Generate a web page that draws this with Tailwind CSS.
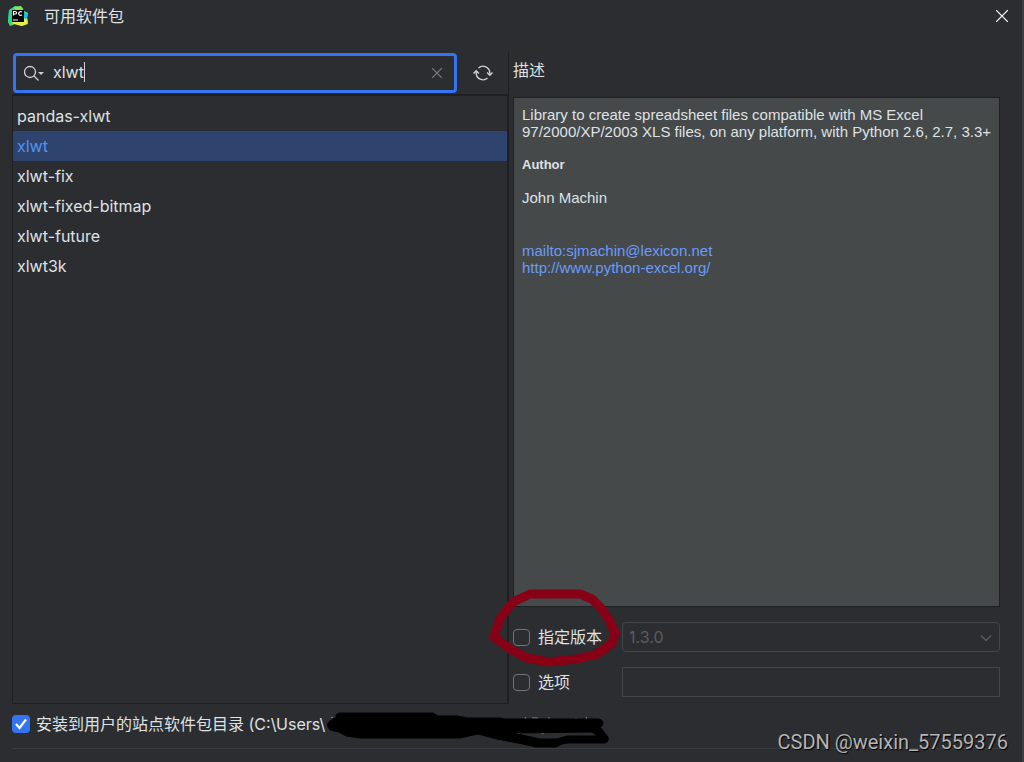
<!DOCTYPE html>
<html lang="zh-CN">
<head>
<meta charset="utf-8">
<meta name="viewport" content="width=device-width, initial-scale=1">
<title>可用软件包</title>
<script src="https://cdn.jsdelivr.net/npm/@tailwindcss/browser@4"></script>
</head>
<body class="relative flex min-h-screen flex-col border-r-2 border-[#3c3e41] bg-[#2b2d30] font-['Inter','Noto_Sans_CJK_SC',sans-serif] text-base leading-6 text-[#dfe1e5]">

<header class="flex h-8 items-center pr-3 pl-2">
  <svg class="h-5 w-5" viewBox="0 0 20 20" aria-hidden="true">
    <defs>
      <linearGradient id="pc" x1="0" y1="0" x2="1" y2="1"><stop offset="0" stop-color="#21d789"/><stop offset=".5" stop-color="#4fdc6b"/><stop offset="1" stop-color="#fcf84a"/></linearGradient>
    </defs>
    <path d="M1 4 7 0l7 1 2 4 4 2-1 4 1 5-6 4-7-2-5 2-2-4z" fill="url(#pc)"/>
    <path d="M0 16l1-11 3-1v14z" fill="#21d789"/>
    <path d="M6 1l7-1 3 5H8z" fill="#8be24f"/>
    <path d="M16 6l4 2-1 4-3 2z" fill="#07c3f2"/>
    <path d="M4 16h12v-4l3 3 1 3-6 2-8-2z" fill="#e4ef4a"/>
    <path d="M4 4h12v12H4z" fill="#000"/>
    <path d="M5.500 9.500V5.500h1.800a1.200 1.200 0 0 1 0 2.500H5.500M14 6.200a1.900 1.900 0 1 0 0 2.600M5 14h5" fill="none" stroke="#fff" stroke-width="1.200"/>
  </svg>
  <h1 class="ml-4 flex-1">可用软件包</h1>
  <button type="button" aria-label="关闭" class="p-0.5">
    <svg class="h-3 w-3" viewBox="0 0 12 12" fill="none" stroke="#fff" stroke-width="1.200"><path d="M0 0l12 12M12 0L0 12"/></svg>
  </button>
</header>

<main class="grid flex-1 grid-cols-[497fr_487fr] gap-1 pt-5 pr-[22px] pl-3">
  <section class="flex flex-col" aria-label="软件包">
    <div class="flex h-[42px] items-center border-r border-[#1e1f22] pl-px">
      <div class="relative flex h-10 flex-1 items-center rounded-sm border-[3px] border-[#3574f0] pr-2 pl-2">
        <svg class="h-5 w-5" viewBox="0 0 20 20" fill="none" stroke="#ced0d6" stroke-width="1.300" aria-hidden="true"><circle cx="6" cy="9" r="5.500"/><path d="M10 13l4.500 4.500"/><path d="M14 9h6L17 12z" fill="#ced0d6" stroke="none"/></svg>
        <input type="text" value="xlwt" aria-label="搜索" class="ml-[9px] w-full min-w-0 flex-1 bg-transparent pb-0.5 outline-none">
        <span class="absolute top-1.5 left-[68px] h-5 w-px bg-[#ced0d6]"></span>
        <button type="button" aria-label="清除" class="p-1">
          <svg class="h-2.5 w-2.5" viewBox="0 0 10 10" fill="none" stroke="#7b7d82" stroke-width="1.200"><path d="M0 0l10 10M10 0L0 10"/></svg>
        </button>
      </div>
      <button type="button" aria-label="刷新" class="mr-[15px] ml-4 h-5 w-5">
        <svg class="h-5 w-5" viewBox="0 0 20 20" fill="none" stroke="#ced0d6" stroke-width="1.400"><path d="M16.800 12V10A6.800 6.800 0 0 0 5.500 4.900M3.200 8v2a6.800 6.800 0 0 0 11.300 5.100"/><path d="M.5 10.500l2.700-2.700 2.700 2.700M14.100 9.500l2.700 2.700 2.700-2.700"/></svg>
      </button>
    </div>
    <ul class="flex-1 border border-t-2 border-r-2 border-[#1e1f22] pt-[5px] leading-[30px] *:px-1">
      <li>pandas-xlwt</li>
      <li class="bg-[#2e436e] text-[#5394ec]" aria-current="true">xlwt</li>
      <li>xlwt-fix</li>
      <li>xlwt-fixed-bitmap</li>
      <li>xlwt-future</li>
      <li>xlwt3k</li>
    </ul>
  </section>

  <section class="flex flex-col" aria-labelledby="desc">
    <h2 id="desc" class="h-[45px] pt-1.5">描述</h2>
    <article class="flex-1 border border-[#1e1f22] bg-[#45494a] py-2 pl-2 font-['Liberation_Sans',sans-serif] text-[15px] leading-[17px]">
      <p>Library to create spreadsheet files compatible with MS Excel<br>97/2000/XP/2003 XLS files, on any platform, with Python 2.6, 2.7, 3.3+</p>
      <h3 class="mt-4 text-[13px] font-bold">Author</h3>
      <p class="mt-4">John Machin</p>
      <p class="mt-9 text-[#6b9bfa]"><a href="mailto:sjmachin@lexicon.net">mailto:sjmachin@lexicon.net</a><br><a href="http://www.python-excel.org/">http://www.python-excel.org/</a></p>
    </article>
    <div class="grid grid-cols-[109px_1fr] items-center gap-y-[15px] pt-[15px] pb-[7px]">
      <label class="flex items-center gap-2"><input type="checkbox" class="h-[17px] w-[17px] appearance-none rounded-sm border border-[#6f737a]">指定版本</label>
      <div class="relative">
        <select disabled aria-label="版本" class="block h-[30px] w-full appearance-none rounded-sm border border-[#43454a] px-1.5 leading-6 text-[#5a5d63] opacity-100"><option>1.3.0</option></select>
        <svg class="pointer-events-none absolute top-3 right-2 h-2 w-3" viewBox="0 0 12 8" fill="none" stroke="#5a5d63" stroke-width="1.400"><path d="M1 1.500l5 5 5-5"/></svg>
      </div>
      <label class="flex items-center gap-2"><input type="checkbox" class="h-[17px] w-[17px] appearance-none rounded-sm border border-[#6f737a]">选项</label>
      <input type="text" aria-label="选项值" class="h-[30px] w-full min-w-0 border border-[#43454a] px-2">
    </div>
  </section>
</main>

<footer class="ml-3 pb-[13px]">
  <div class="mr-[22px] flex h-[45px] items-center border-b border-[#393b40] pb-1">
    <label class="flex items-center gap-1.5 whitespace-nowrap">
      <span class="relative flex">
        <input type="checkbox" checked class="h-[18px] w-[18px] appearance-none rounded-sm bg-[#3574f0]">
        <svg class="pointer-events-none absolute inset-0" viewBox="0 0 18 18" fill="none" stroke="#fff" stroke-width="2.200"><path d="M4 9l3.500 4L14 4.500"/></svg>
      </span>
      安装到用户的站点软件包目录 (C:\Users\
    </label>
  </div>
</footer>

<svg class="pointer-events-none absolute top-[580px] left-[480px] h-[90px] w-[150px]" viewBox="480 580 150 90" fill="none" stroke="#880015" stroke-width="9" stroke-linejoin="round" stroke-linecap="round" aria-hidden="true"><path d="M530 594h50l12 5 9 9 7 10 7 15-3 10-15 11-20 5-29 3-21-4-17-9-16-12 2-7 5-13 12-15z"/></svg>
<svg class="pointer-events-none absolute top-[705px] left-[320px] h-[50px] w-[300px]" viewBox="320 705 300 50" aria-hidden="true">
  <path d="M331 718l2-1M525 717l1 2M532 718h6M549 717v2M576 718v1M586 717l1 2M517 734l4-2M541 733h3" stroke="#8d8f93" fill="none"/>
  <path d="M336 716q0-3 5-3h92l5 3h19l11 2h32l4 1h95q4 1 4 4t-3 4l8 10q1 5-3 6h-38l-5 1-6 3h-20l-13-3-26-5-19-5-18 4H360l-14-2-7-4-9-2q-5-6 0-9 3-3 6-3zM513 733l27 6h17l10-3h30l-5-4z" fill="#000" stroke="#000" fill-rule="evenodd"/>
</svg>
<p class="pointer-events-none absolute right-[14px] bottom-2 font-['Roboto',sans-serif] text-xl leading-6 text-[#b4b4b5] [text-shadow:1px_1px_1px_#000]">CSDN @weixin_57559376</p>
</body>
</html>
